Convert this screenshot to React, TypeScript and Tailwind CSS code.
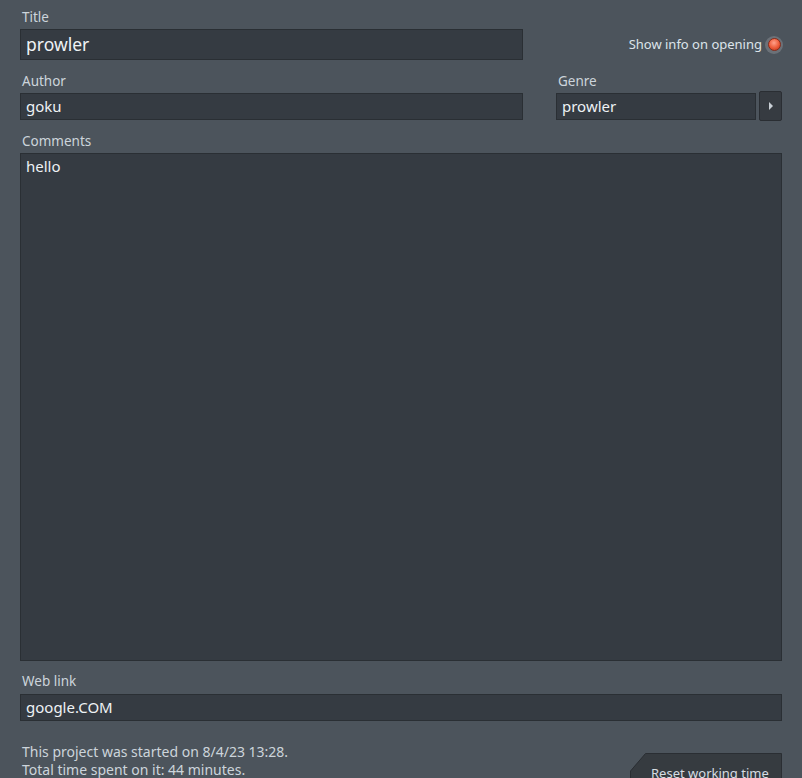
import React from 'react';

const font = { fontFamily: '"Noto Sans", "Liberation Sans", sans-serif' };

function Label({ children }: { children: React.ReactNode }) {
  return <div className="text-[13.5px] leading-[16px] text-[#ccd4db] px-[2px]">{children}</div>;
}

export default function App() {
  return (
    <div className="w-[802px] h-[778px] overflow-hidden bg-[#4c545c] text-[#dfe6ec]" style={font}>
      <div className="pl-[20px] pr-[20px] pt-[9px]">
        {/* title row */}
        <div className="flex items-end">
          <div className="w-[503px]">
            <Label>Title</Label>
            <div className="mt-[4px] h-[31px] bg-[#353b42] border border-[#2a2f34] flex items-center px-[5px] text-[17.5px] text-[#eef2f5]">
              prowler
            </div>
          </div>
          <div className="flex-1 flex items-center justify-end h-[31px] gap-[3px] -mr-[1px]">
            <span className="text-[13px] text-[#dde4ea]">Show info on opening</span>
            <span className="w-[18px] h-[18px] rounded-full bg-[#6b7178] flex items-center justify-center">
              <span className="w-[13px] h-[13px] rounded-full border border-[#8a2a18] bg-[radial-gradient(circle_at_45%_35%,#ffa08a,#ec5a38_55%,#b0321c)]" />
            </span>
          </div>
        </div>

        {/* author / genre */}
        <div className="flex mt-[13px]">
          <div className="w-[503px]">
            <Label>Author</Label>
            <div className="mt-[4px] h-[27px] bg-[#353b42] border border-[#2a2f34] flex items-center px-[5px] text-[15px] text-[#eef2f5]">
              goku
            </div>
          </div>
          <div className="ml-[33px] flex-1">
            <Label>Genre</Label>
            <div className="mt-[2px] flex items-start">
              <div className="w-[200px] mt-[2px] h-[27px] bg-[#353b42] border border-[#2a2f34] flex items-center px-[5px] text-[15px] text-[#eef2f5]">
                prowler
              </div>
              <div className="ml-[3px] w-[23px] h-[30px] rounded-[2px] bg-[#363b41] border border-[#2a2e33] flex items-center justify-center">
                <svg width="6" height="8" viewBox="0 0 6 8">
                  <path d="M1 0 L5 4 L1 8 Z" fill="#c9d0d6" />
                </svg>
              </div>
            </div>
          </div>
        </div>

        {/* comments */}
        <div className="mt-[12px]">
          <Label>Comments</Label>
          <div className="mt-[4px] h-[508px] bg-[#353b42] border border-[#2a2f34] px-[5px] pt-[1px] text-[15px] text-[#eef2f5]">
            hello
          </div>
        </div>

        {/* web link */}
        <div className="mt-[12px]">
          <Label>Web link</Label>
          <div className="mt-[5px] h-[27px] bg-[#353b42] border border-[#2a2f34] flex items-center px-[5px] text-[15px] text-[#eef2f5]">
            google.COM
          </div>
        </div>

        {/* footer */}
        <div className="flex mt-[22px]">
          <div className="flex-1 text-[14px] leading-[18px] text-[#ccd4db] px-[2px]">
            <div>This project was started on 8/4/23 13:28.</div>
            <div>Total time spent on it: 44 minutes.</div>
          </div>
          <div className="mt-[10px] w-[152px] h-[40px] relative">
            <svg className="absolute inset-0" width="152" height="40" viewBox="0 0 152 40">
              <path d="M15.5 0.5 L151.5 0.5 L151.5 40 L0.5 40 L0.5 18 Z" fill="#363b40" stroke="#2a2e33" />
            </svg>
            <div className="relative pl-[21px] pt-[11px] text-[13px] text-[#d5dce2]">Reset working time</div>
          </div>
        </div>
      </div>
    </div>
  );
}
